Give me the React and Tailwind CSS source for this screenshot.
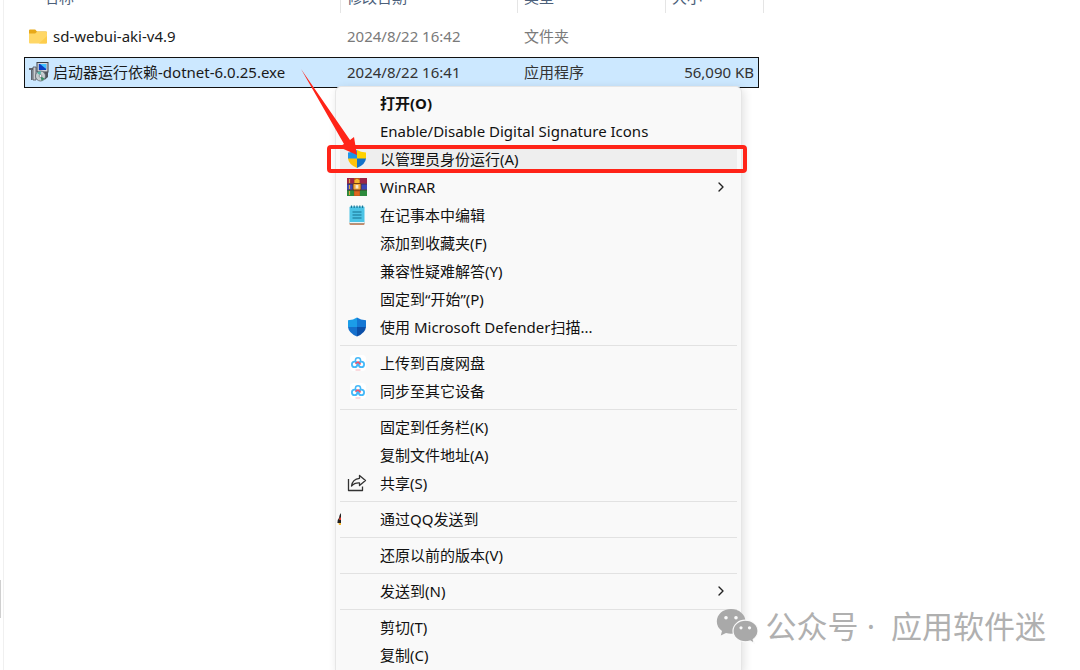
import React from "react";
import { ChevronRight } from "lucide-react";

const FolderIcon = () => (
  <svg viewBox="0 0 18 15" className="h-[15px] w-[18px] shrink-0">
    <path d="M0 1.5Q0 .5 1 .5H6.2L8 2.4H17Q18 2.4 18 3.4V8H0Z" fill="#e8a918" />
    <path d="M0 4.4H6.2L8 2.8H17Q18 2.8 18 3.8V13.4Q18 14.4 17 14.4H1Q0 14.4 0 13.4Z" fill="#ffd766" />
    <path d="M10 14.4L18 7V13.4Q18 14.4 17 14.4Z" fill="#fdcd4c" />
  </svg>
);

const InstallerIcon = () => (
  <svg viewBox="0 0 20 20" className="size-5 shrink-0">
    <path d="M0 6H5V8H3.5V18H2V8H0Z" fill="#5f636b" />
    <path d="M4 5H7V18H4Z" fill="#c9ccd1" stroke="#4b4f57" strokeWidth="0.8" />
    <rect x="8" y="0.5" width="11" height="9.5" fill="#d4d6da" stroke="#3c4048" />
    <rect x="9.8" y="2" width="7.4" height="6" fill="#0a3fc4" />
    <path d="M11 2H17.2V7Z" fill="#3fc1ff" />
    <path d="M14 10H19V15L15.5 18Z" fill="#50545c" />
    <circle cx="11.5" cy="14" r="5" fill="#c8cfd2" stroke="#5c636b" strokeWidth="0.8" />
    <path d="M11.5 14L8 10.8A5 5 0 0 1 12 9.2Z" fill="#4fb3a6" />
    <path d="M11.5 14L15.4 16.5A5 5 0 0 1 12.5 18.8Z" fill="#3b8f6a" />
    <circle cx="11.5" cy="14" r="1.4" fill="#fff" stroke="#5c636b" strokeWidth="0.6" />
  </svg>
);

const AdminShieldIcon = () => (
  <svg viewBox="0 0 18 18" className="size-[18px]">
    <path d="M9 0Q5.5 2.4 0 2.4V9H9Z" fill="#1c94e8" />
    <path d="M9 0Q12.5 2.4 18 2.4V9H9Z" fill="#ffd200" />
    <path d="M0 8.6Q.6 14.6 9 18V8.6Z" fill="#ffc20a" />
    <path d="M18 8.6Q17.4 14.6 9 18V8.6Z" fill="#1272c9" />
  </svg>
);

const WinRarIcon = () => (
  <svg viewBox="0 0 20 18" className="h-[18px] w-5">
    <rect width="20" height="5.8" fill="#9c2447" />
    <rect y="6" width="20" height="5.8" fill="#3b45b4" />
    <rect y="12" width="20" height="6" fill="#2c8a3c" />
    <path d="M0 5.9H20M0 11.9H20" stroke="#3a1a2c" strokeWidth="0.8" />
    <path d="M2.5 1V5M2.5 7V11M2.5 13V17" stroke="#d9a441" strokeWidth="1.2" />
    <rect x="7" y="0" width="6" height="18" fill="#b5541c" />
    <path d="M7.5 5V2.5Q10 -1 12.5 2.5V5Z" fill="#f5b62e" />
    <rect x="6" y="5.5" width="8" height="6.5" rx="1" fill="#f0a73a" stroke="#5b2b12" strokeWidth="0.8" />
    <rect x="8.6" y="7" width="2.8" height="3.5" fill="#f4e8d0" />
    <rect x="7.5" y="13.5" width="5" height="4" fill="#e0661e" />
  </svg>
);

const NotepadIcon = () => (
  <svg viewBox="0 0 16 20" className="h-5 w-4">
    <rect x="0.5" y="17" width="15" height="2.8" rx="0.8" fill="#b8663a" />
    <rect x="0.5" y="1.6" width="15" height="16.6" rx="1" fill="#4cc4e6" />
    <rect x="0.5" y="17" width="15" height="1.2" fill="#e9f3f6" />
    <path d="M3.5 7H12.5M3.5 10H12.5M3.5 13H12.5" stroke="#14718f" strokeWidth="1.2" />
    <path d="M2.5 .5V3M5.2 .5V3M8 .5V3M10.8 .5V3M13.5 .5V3" stroke="#1b7797" strokeWidth="1.2" />
  </svg>
);

const DefenderIcon = () => (
  <svg viewBox="0 0 18 20" className="h-5 w-[18px]">
    <path d="M9 .6Q5.5 3.2 0 3.2V10H9Z" fill="#1b9de8" />
    <path d="M9 .6Q12.5 3.2 18 3.2V10H9Z" fill="#1477d4" />
    <path d="M0 10Q.6 16 9 19.6V10Z" fill="#1570cc" />
    <path d="M18 10Q17.4 16 9 19.6V10Z" fill="#0b4fa8" />
  </svg>
);

const NetdiskIcon = () => (
  <svg viewBox="0 0 16 16" className="ml-[2px] size-4">
    <rect width="16" height="16" rx="4" fill="#fff" />
    <circle cx="8" cy="5.4" r="2.6" fill="none" stroke="#45b8f8" strokeWidth="1.5" />
    <circle cx="4.6" cy="9.4" r="2.7" fill="none" stroke="#45b8f8" strokeWidth="1.8" />
    <circle cx="11.4" cy="9.4" r="2.7" fill="none" stroke="#45b8f8" strokeWidth="1.8" />
    <path d="M5.4 8.6L8 6.9L10.6 9.4" fill="none" stroke="#f0526a" strokeWidth="1.6" />
    <path d="M5.5 15H10.5" stroke="#f4a3ad" strokeWidth="0.8" />
  </svg>
);

const ShareIcon = () => (
  <svg viewBox="0 0 20 18" className="h-[18px] w-5" fill="none" stroke="#333" strokeWidth="1.3" strokeLinejoin="round">
    <path d="M1.5 5V16.5H15.5V12.5" />
    <path d="M12.500 1.5L18.5 6.5L12.500 11.5V8.800Q7.500 8.500 4.500 12Q5.500 5 12.500 4.300Z" />
  </svg>
);

const QQIcon = () => (
  <svg viewBox="0 0 4 14" className="-ml-[3px] h-[14px] w-1">
    <path d="M4 1Q2 3 2 6Q0 8 .4 11L4 11Z" fill="#222" />
    <path d="M2.5 5.5H4V8H2.2Z" fill="#e33b2e" />
    <path d="M1.5 11H4V13H2Z" fill="#f5b52b" />
  </svg>
);

const WechatIcon = () => (
  <svg viewBox="0 0 42 36" className="h-9 w-[42px]">
    <path
      d="M15 1C7 1 .8 6.4 .8 13.5C.8 17.5 2.8 20.7 6 23L4.8 27.5L10 25Q12.500 25.8 15 25.8C23 25.8 29.5 20.5 29.5 13.5S23 1 15 1Z"
      fill="#a9a9a9"
    />
    <path
      d="M29.5 12.2C22.5 12.2 17 17 17 23S22.5 33.8 29.5 33.8Q31.8 33.8 34 33L38.2 35.2L37.2 31.5C40.2 29.5 42 26.5 42 23C42 17 36.5 12.2 29.5 12.2Z"
      fill="#a9a9a9"
      stroke="#fafafa"
      strokeWidth="1.2"
    />
    <g fill="#fafafa">
      <circle cx="10" cy="9.8" r="1.8" />
      <circle cx="20" cy="9.8" r="1.8" />
      <circle cx="25" cy="19.8" r="1.6" />
      <circle cx="33.5" cy="19.8" r="1.6" />
    </g>
  </svg>
);

const files = [
  { name: "sd-webui-aki-v4.9", date: "2024/8/22 16:42", type: "文件夹", size: "", icon: FolderIcon },
];

const selectedFile = {
  name: "启动器运行依赖-dotnet-6.0.25.exe",
  date: "2024/8/22 16:41",
  type: "应用程序",
  size: "56,090 KB",
};

const menuGroups = [
  [
    { label: "打开(O)", bold: true },
    { label: "Enable/Disable Digital Signature Icons" },
    { label: "以管理员身份运行(A)", icon: AdminShieldIcon, marked: true },
    { label: "WinRAR", icon: WinRarIcon, submenu: true },
    { label: "在记事本中编辑", icon: NotepadIcon },
    { label: "添加到收藏夹(F)" },
    { label: "兼容性疑难解答(Y)" },
    { label: "固定到“开始”(P)" },
    { label: "使用 Microsoft Defender扫描...", icon: DefenderIcon },
  ],
  [
    { label: "上传到百度网盘", icon: NetdiskIcon },
    { label: "同步至其它设备", icon: NetdiskIcon },
  ],
  [
    { label: "固定到任务栏(K)" },
    { label: "复制文件地址(A)" },
    { label: "共享(S)", icon: ShareIcon },
  ],
  [{ label: "通过QQ发送到", icon: QQIcon, clipped: true }],
  [{ label: "还原以前的版本(V)" }],
  [{ label: "发送到(N)", submenu: true }],
  [{ label: "剪切(T)" }, { label: "复制(C)" }],
];

const MenuItem = ({ label, icon: Icon, bold, marked, submenu, clipped }) => (
  <button
    type="button"
    role="menuitem"
    className={`relative flex h-7 w-full items-center text-left ${
      marked ? "bg-[#eeeeee]" : "hover:bg-[#eeeeee]"
    } ${bold ? "font-bold" : ""}`}
  >
    <span className={`mr-1.5 flex w-[34px] items-center ${clipped ? "justify-start" : "justify-center"}`}>
      {Icon && <Icon />}
    </span>
    <span className="flex-1 whitespace-nowrap">{label}</span>
    {submenu && <ChevronRight className="mr-2 size-4 text-[#222]" strokeWidth={2} />}
    {marked && (
      <span className="pointer-events-none absolute inset-y-0 -left-[13px] -right-[10px] rounded-[4px] border-4 border-[#ff2418]" />
    )}
  </button>
);

const ContextMenu = () => (
  <div
    role="menu"
    className="absolute left-[335px] top-[86px] w-[407px] rounded-t-md border border-[#e6e6e6] bg-[#f9f9f9] px-1 py-0.5 text-[#111] shadow-[2px_2px_10px_rgba(0,0,0,0.12)]"
  >
    {menuGroups.map((group, i) => (
      <div key={group[0].label}>
        {i > 0 && (
          <div role="separator" className="flex h-2 items-center">
            <div className="h-px w-full bg-[#e2e2e2]" />
          </div>
        )}
        {group.map((item) => (
          <MenuItem key={item.label} {...item} />
        ))}
      </div>
    ))}
  </div>
);

const FileTable = () => (
  <table className="-mt-5 w-[740px] table-fixed border-separate border-spacing-0 whitespace-nowrap text-left">
    <colgroup>
      <col className="w-[317px]" />
      <col className="w-[177px]" />
      <col className="w-[148px]" />
      <col className="w-[93px]" />
      <col className="w-[5px]" />
    </colgroup>
    <thead className="text-[#4c607a]">
      <tr className="h-[33px]">
        <th className="border-r border-[#e5e5e5] pl-5 font-normal">名称</th>
        <th className="border-r border-[#e5e5e5] pl-1.5 font-normal">修改日期</th>
        <th className="border-r border-[#e5e5e5] pl-1.5 font-normal">类型</th>
        <th colSpan={2} className="border-r border-[#e5e5e5] pl-1.5 font-normal">
          大小
        </th>
      </tr>
    </thead>
    <tbody>
      {files.map((file) => (
        <tr key={file.name} className="h-11 text-[#7a7a7a]">
          <td className="pl-[5px] pt-0.5 text-[#1a1a1a]">
            <div className="flex items-center gap-1.5">
              <file.icon />
              {file.name}
            </div>
          </td>
          <td className="pl-1.5 pt-0.5">{file.date}</td>
          <td className="pl-1.5 pt-0.5">{file.type}</td>
          <td className="pt-0.5">{file.size}</td>
          <td />
        </tr>
      ))}
      <tr aria-selected="true" className="h-[31px] text-[#333]">
        <td className="border-y border-l border-[#111] bg-[#cce8ff] pb-0.5 pl-1 text-[#1a1a1a]">
          <div className="flex items-center gap-1">
            <InstallerIcon />
            {selectedFile.name}
          </div>
        </td>
        <td className="border-y border-[#111] bg-[#cce8ff] pb-0.5 pl-1.5">{selectedFile.date}</td>
        <td className="border-y border-[#111] bg-[#cce8ff] pb-0.5 pl-1.5">{selectedFile.type}</td>
        <td className="border-y border-r border-[#111] bg-[#cce8ff] pb-0.5 pr-1 text-right">
          {selectedFile.size}
        </td>
        <td />
      </tr>
    </tbody>
  </table>
);

const App = () => {
  return (
    <div className="relative flex h-screen overflow-hidden bg-white font-['Noto_Sans','Noto_Sans_CJK_SC',sans-serif] text-[15px] leading-5">
      <aside className="flex w-1 shrink-0 flex-col justify-end border-r border-[#f0f0f0] pb-[52px]">
        <div className="h-[38px] w-px bg-[#cfcfcf]" />
      </aside>

      <main className="flex-1 pl-5">
        <FileTable />
      </main>

      <ContextMenu />

      {/* arrow from the file to the menu entry */}
      <svg viewBox="0 0 62 88" className="pointer-events-none absolute left-[300px] top-[68px] h-[88px] w-[62px]">
        <path d="M1 1L50 72L54 69L57 87L39 79L44 76Z" fill="#ff2418" />
      </svg>

      <div className="pointer-events-none absolute bottom-[26px] right-[34px] flex items-center gap-2">
        <WechatIcon />
        <span className="text-[31px] leading-9 text-[#b0b0b0]">
          公众号 <span className="mr-2">·</span> 应用软件迷
        </span>
      </div>
    </div>
  );
};

export default App;
